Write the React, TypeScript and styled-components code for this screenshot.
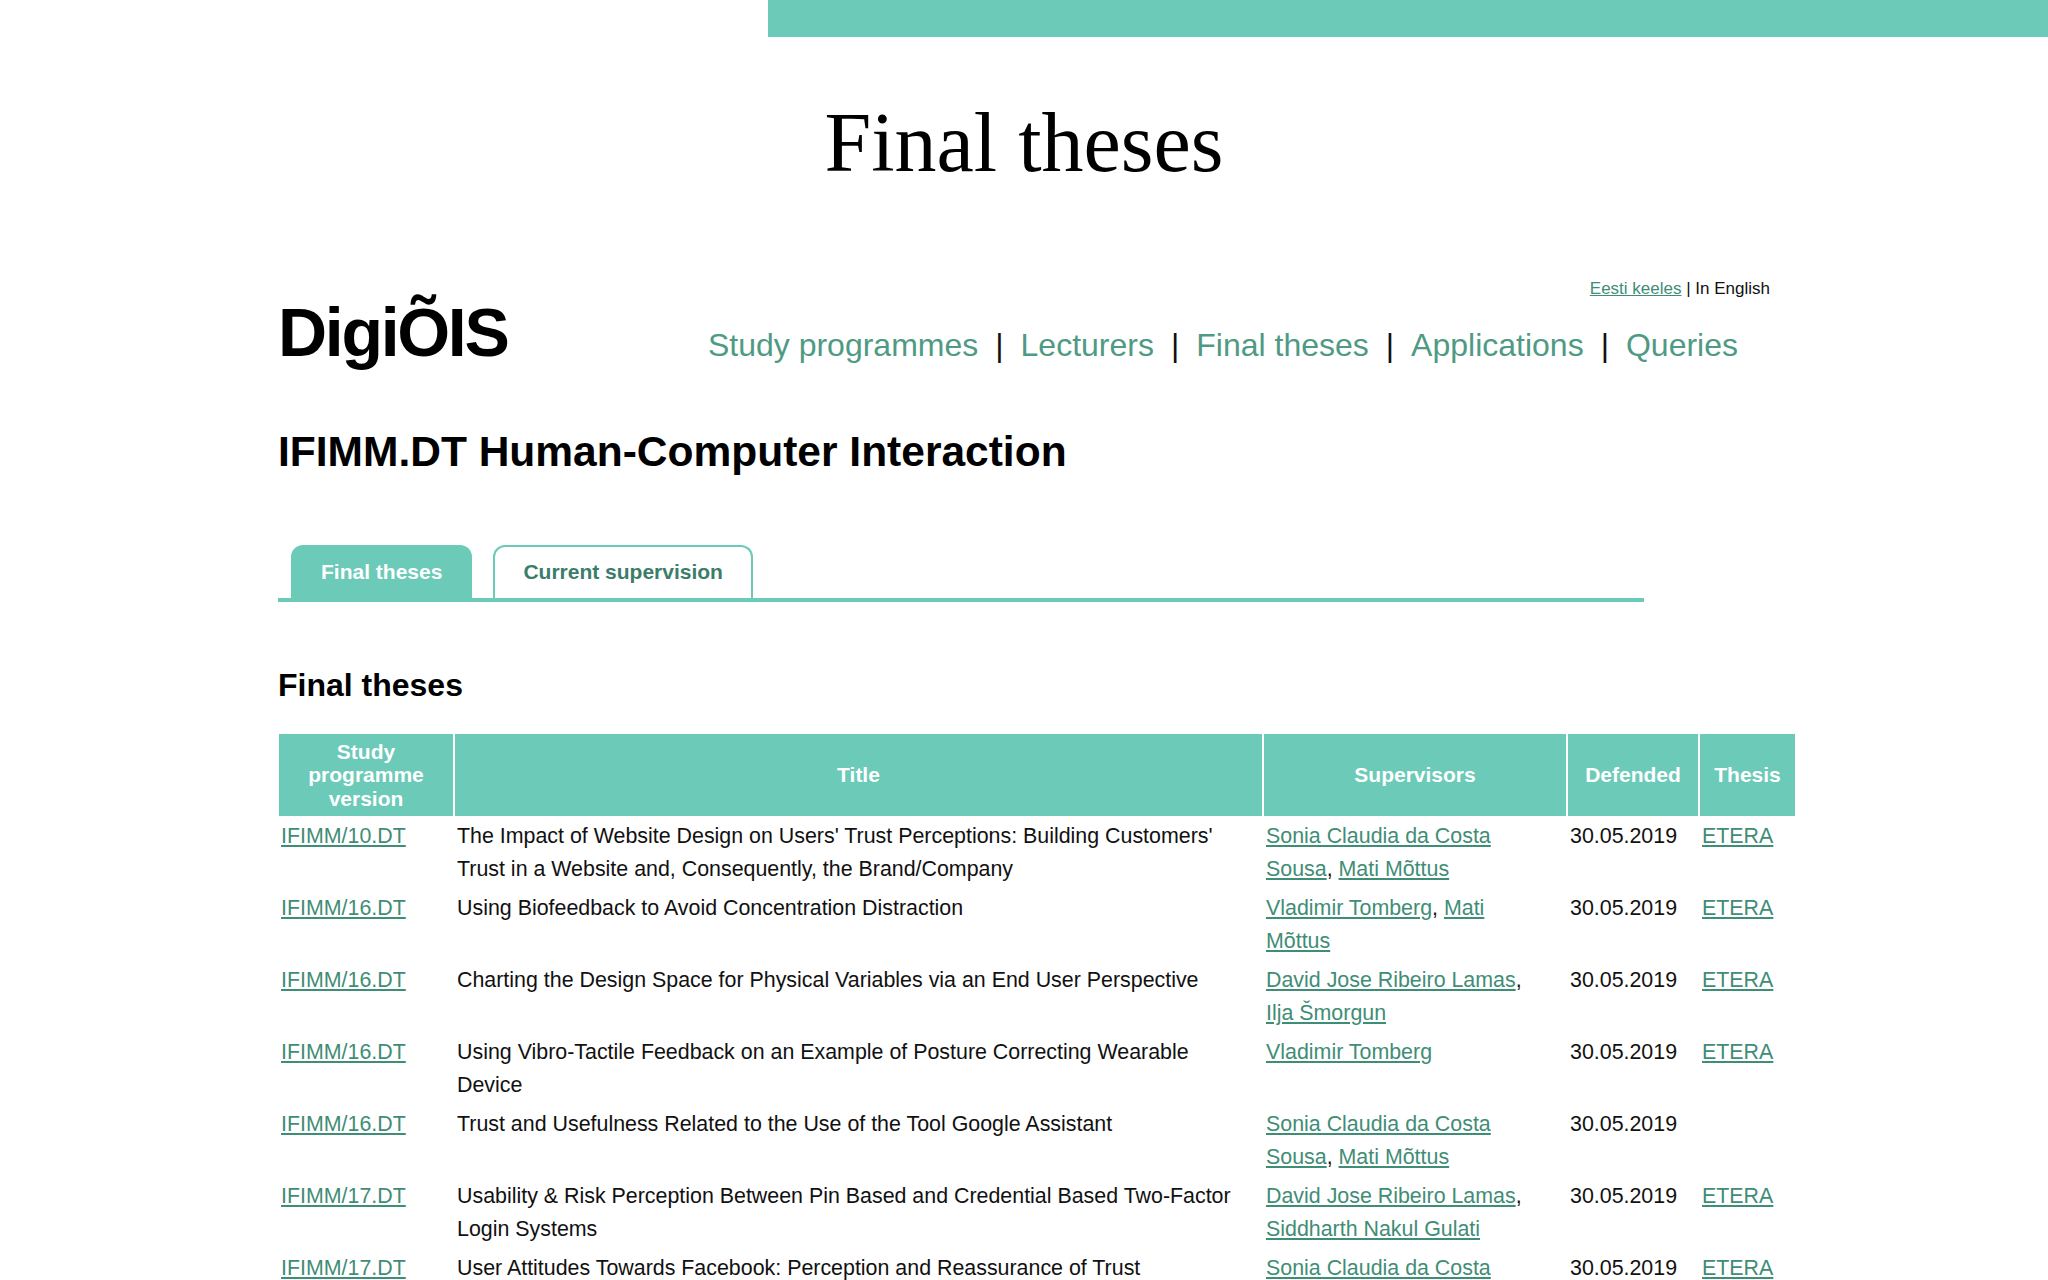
import React from "react";
import styled, { createGlobalStyle } from "styled-components";

const teal = "#6ccab8";
const linkGreen = "#3f8d76";

const GlobalStyle = createGlobalStyle`
  html, body {
    margin: 0;
    padding: 0;
    background: #fff;
  }
  body {
    width: 2048px;
    height: 1280px;
    overflow: hidden;
    font-family: "Liberation Sans", Arial, Helvetica, sans-serif;
    color: #111;
  }
`;

const TopBar = styled.div`
  width: 1280px;
  height: 37px;
  margin-left: auto;
  background: ${teal};
`;

const SlideTitle = styled.h1`
  margin: 64px 0 0;
  font-family: "Liberation Serif", "Times New Roman", serif;
  font-weight: 400;
  font-size: 84px;
  line-height: 1;
  text-align: center;
  color: #000;
`;

const Page = styled.div`
  width: 1520px;
  margin: 94px 0 0 278px;
`;

const LangRow = styled.div`
  display: flex;
  justify-content: flex-end;
  padding-right: 28px;
  font-size: 17px;
  line-height: 20px;
  color: #111;
`;

const LangLink = styled.a`
  color: ${linkGreen};
  text-decoration: underline;
`;

const HeaderRow = styled.div`
  display: flex;
  align-items: baseline;
  justify-content: space-between;
  padding-right: 60px;
  margin-top: -1px;
`;

const Logo = styled.div`
  font-weight: 700;
  font-size: 68px;
  line-height: 1;
  letter-spacing: -2.3px;
  color: #000;
`;

const Nav = styled.nav`
  display: flex;
  align-items: baseline;
  font-size: 32px;
  font-weight: 400;
`;

const NavLink = styled.a`
  color: #4f9a84;
  text-decoration: none;
`;

const NavSep = styled.span`
  margin: 0 17px;
  color: #111;
`;

const Heading = styled.h2`
  margin: 65px 0 0;
  font-size: 42.5px;
  font-weight: 700;
  line-height: 1;
  color: #000;
`;

const TabBar = styled.div`
  display: flex;
  gap: 21px;
  width: 1366px;
  margin-top: 71px;
  padding-left: 13px;
  box-sizing: border-box;
  border-bottom: 4px solid ${teal};
`;

const Tab = styled.div<{ $active?: boolean }>`
  display: flex;
  align-items: center;
  justify-content: center;
  height: 53px;
  padding: 0 28px;
  box-sizing: border-box;
  border: 2px solid ${teal};
  border-bottom: none;
  border-radius: 12px 12px 0 0;
  background: ${(p) => (p.$active ? teal : "#fff")};
  color: ${(p) => (p.$active ? "#fff" : "#3b7d6b")};
  font-size: 21px;
  font-weight: 700;
`;

const SubHeading = styled.h3`
  margin: 67px 0 0;
  font-size: 32px;
  font-weight: 700;
  line-height: 1;
  color: #000;
`;

const Table = styled.table`
  margin: 31px 0 0 -1px;
  width: 1520px;
  table-layout: fixed;
  border-collapse: separate;
  border-spacing: 2px;
`;

const Col = styled.col<{ $w: number }>`
  width: ${(p) => p.$w}px;
`;

const HeadCell = styled.th`
  padding: 6px 4px;
  background: ${teal};
  color: #fff;
  font-size: 21px;
  font-weight: 700;
  line-height: 23.5px;
  text-align: center;
  vertical-align: middle;
`;

const Cell = styled.td<{ $padRight?: number }>`
  padding: 2px ${(p) => p.$padRight ?? 3}px 3px 2px;
  font-size: 21.4px;
  line-height: 32.5px;
  vertical-align: top;
  text-align: left;
  color: #111;
`;

const Link = styled.a`
  color: ${linkGreen};
  text-decoration: underline;
  text-underline-offset: 2px;
`;

type Row = {
  version: string;
  title: string;
  supervisors: string[];
  defended: string;
  thesis?: string;
};

const rows: Row[] = [
  {
    version: "IFIMM/10.DT",
    title:
      "The Impact of Website Design on Users' Trust Perceptions: Building Customers' Trust in a Website and, Consequently, the Brand/Company",
    supervisors: ["Sonia Claudia da Costa Sousa", "Mati Mõttus"],
    defended: "30.05.2019",
    thesis: "ETERA",
  },
  {
    version: "IFIMM/16.DT",
    title: "Using Biofeedback to Avoid Concentration Distraction",
    supervisors: ["Vladimir Tomberg", "Mati Mõttus"],
    defended: "30.05.2019",
    thesis: "ETERA",
  },
  {
    version: "IFIMM/16.DT",
    title:
      "Charting the Design Space for Physical Variables via an End User Perspective",
    supervisors: ["David Jose Ribeiro Lamas", "Ilja Šmorgun"],
    defended: "30.05.2019",
    thesis: "ETERA",
  },
  {
    version: "IFIMM/16.DT",
    title:
      "Using Vibro-Tactile Feedback on an Example of Posture Correcting Wearable Device",
    supervisors: ["Vladimir Tomberg"],
    defended: "30.05.2019",
    thesis: "ETERA",
  },
  {
    version: "IFIMM/16.DT",
    title:
      "Trust and Usefulness Related to the Use of the Tool Google Assistant",
    supervisors: ["Sonia Claudia da Costa Sousa", "Mati Mõttus"],
    defended: "30.05.2019",
  },
  {
    version: "IFIMM/17.DT",
    title:
      "Usability & Risk Perception Between Pin Based and Credential Based Two-Factor Login Systems",
    supervisors: ["David Jose Ribeiro Lamas", "Siddharth Nakul Gulati"],
    defended: "30.05.2019",
    thesis: "ETERA",
  },
  {
    version: "IFIMM/17.DT",
    title:
      "User Attitudes Towards Facebook: Perception and Reassurance of Trust",
    supervisors: ["Sonia Claudia da Costa Sousa", "Mati Mõttus"],
    defended: "30.05.2019",
    thesis: "ETERA",
  },
];

const navItems = [
  "Study programmes",
  "Lecturers",
  "Final theses",
  "Applications",
  "Queries",
];

export default function App() {
  return (
    <>
      <GlobalStyle />
      <TopBar />
      <SlideTitle>Final theses</SlideTitle>
      <Page>
        <LangRow>
          <LangLink href="#">Eesti keeles</LangLink>&nbsp;|&nbsp;In English
        </LangRow>
        <HeaderRow>
          <Logo>DigiÕIS</Logo>
          <Nav>
            {navItems.map((item, i) => (
              <React.Fragment key={item}>
                {i > 0 && <NavSep>|</NavSep>}
                <NavLink href="#">{item}</NavLink>
              </React.Fragment>
            ))}
          </Nav>
        </HeaderRow>
        <Heading>IFIMM.DT Human-Computer Interaction</Heading>
        <TabBar>
          <Tab $active>Final theses</Tab>
          <Tab>Current supervision</Tab>
        </TabBar>
        <SubHeading>Final theses</SubHeading>
        <Table>
          <colgroup>
            <Col $w={174} />
            <Col $w={807} />
            <Col $w={302} />
            <Col $w={130} />
            <Col $w={95} />
          </colgroup>
          <thead>
            <tr>
              <HeadCell>Study programme version</HeadCell>
              <HeadCell>Title</HeadCell>
              <HeadCell>Supervisors</HeadCell>
              <HeadCell>Defended</HeadCell>
              <HeadCell>Thesis</HeadCell>
            </tr>
          </thead>
          <tbody>
            {rows.map((row, i) => (
              <tr key={i}>
                <Cell>
                  <Link href="#">{row.version}</Link>
                </Cell>
                <Cell $padRight={22}>{row.title}</Cell>
                <Cell $padRight={30}>
                  {row.supervisors.map((s, j) => (
                    <React.Fragment key={s}>
                      {j > 0 && ", "}
                      <Link href="#">{s}</Link>
                    </React.Fragment>
                  ))}
                </Cell>
                <Cell>{row.defended}</Cell>
                <Cell>{row.thesis && <Link href="#">{row.thesis}</Link>}</Cell>
              </tr>
            ))}
          </tbody>
        </Table>
      </Page>
    </>
  );
}
